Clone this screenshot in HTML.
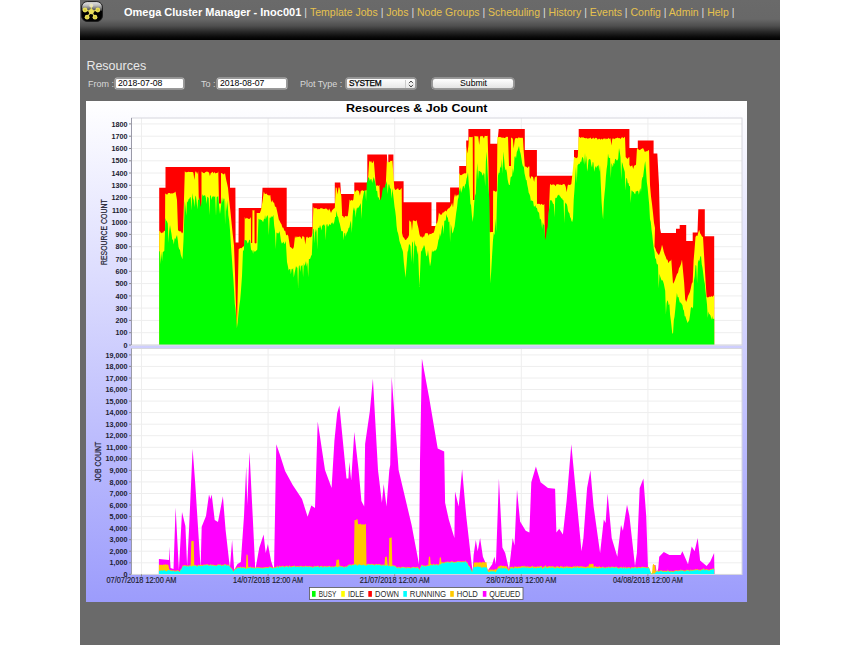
<!DOCTYPE html>
<html><head><meta charset="utf-8">
<style>
html,body{margin:0;padding:0;background:#fff;width:860px;height:645px;overflow:hidden;font-family:"Liberation Sans",sans-serif;}
#page{position:absolute;left:80px;top:0;width:700px;height:645px;background:#6a6a6a;}
#hdr{position:absolute;left:0;top:0;width:700px;height:40px;background:linear-gradient(#6a6a6a 0px,#686868 19px,#4e4e4e 26px,#262626 32px,#0a0a0a 37px,#000 40px);}
#hdr .t{position:absolute;left:44px;top:6px;white-space:nowrap;font-size:11px;color:#fff;font-weight:bold;}
#hdr .l{position:absolute;top:6px;white-space:nowrap;font-size:10.5px;color:#e6c24e;}
#hdr .l b{font-weight:normal;color:#ddd;}
.abs{position:absolute;white-space:nowrap;}
#res{left:6.4px;top:59.3px;font-size:12.5px;color:#e8e8e8;}
.lbl{font-size:9px;color:#d8d8d8;top:79px;}
.inp{position:absolute;top:78.3px;height:9.2px;background:#fff;border:1px solid #9a9a9a;border-radius:2px;box-shadow:0 0 0 0.5px #bbb;}
.inp span{position:absolute;left:2px;top:-1px;font-size:8.7px;color:#000;}
#chart{position:absolute;left:86px;top:101px;}
</style></head><body>
<div id="page">
 <div id="hdr">
  <svg style="position:absolute;left:0.7px;top:1.2px" width="23" height="22" viewBox="0 0 23 22">
   <defs><linearGradient id="lg" x1="0" y1="0" x2="0" y2="1"><stop offset="0" stop-color="#e8e8e8"/><stop offset="0.2" stop-color="#bbb"/><stop offset="0.42" stop-color="#555"/><stop offset="0.5" stop-color="#000"/><stop offset="1" stop-color="#000"/></linearGradient></defs>
   <rect x="0.6" y="0.6" width="20.8" height="19.8" rx="5.5" fill="url(#lg)" stroke="#1a1a1a" stroke-width="1"/>
   <g stroke="#e6dc5a" stroke-width="1.1" fill="none">
    <line x1="10.3" y1="10.6" x2="10.3" y2="4.2"/><line x1="10.3" y1="10.6" x2="4" y2="9"/><line x1="10.3" y1="10.6" x2="16.8" y2="9"/><line x1="10.3" y1="10.6" x2="6.1" y2="16.2"/><line x1="10.3" y1="10.6" x2="14" y2="16.2"/>
   </g>
   <g fill="#e9df5c">
    <circle cx="10.3" cy="10.6" r="2.6"/><circle cx="4" cy="9" r="2.4"/><circle cx="16.8" cy="9" r="2.4"/><circle cx="6.1" cy="16.2" r="2.4"/><circle cx="14" cy="16.2" r="2.4"/>
   </g>
   <g fill="#d7cc3e"><circle cx="4" cy="9" r="1.2"/><circle cx="16.8" cy="9" r="1.2"/><circle cx="6.1" cy="16.2" r="1.2"/><circle cx="14" cy="16.2" r="1.2"/></g>
   <circle cx="10.3" cy="4.4" r="2" fill="#f0ebc0" opacity="0.8"/>
  </svg>
  <div class="t">Omega Cluster Manager - Inoc001 <b style="font-weight:normal;color:#ddd;font-size:10.5px">|</b></div>
  <div class="l" style="left:230px">Template Jobs <b>|</b> Jobs <b>|</b> Node Groups <b>|</b> Scheduling <b>|</b> History <b>|</b> Events <b>|</b> Config <b>|</b> Admin <b>|</b> Help <b>|</b></div>
 </div>
 <div id="res" class="abs">Resources</div>
 <div class="abs lbl" style="left:8px">From :</div>
 <div class="inp" style="left:35px;width:67px"><span>2018-07-08</span></div>
 <div class="abs lbl" style="left:121px">To :</div>
 <div class="inp" style="left:137px;width:68px"><span>2018-08-07</span></div>
 <div class="abs lbl" style="left:220px">Plot Type :</div>
 <div class="inp" style="left:265.5px;width:68px;background:linear-gradient(#fff,#e8e8e8)"><span style="font-size:8.3px;left:2.5px;top:-1px;letter-spacing:-0.3px;-webkit-text-stroke:0.25px #000">SYSTEM</span>
   <div style="position:absolute;left:58px;top:1px;width:1px;height:8px;background:#ccc"></div>
   <svg style="position:absolute;left:61px;top:1px" width="6" height="8"><path d="M1 3.2 L3 1 L5 3.2 M1 4.8 L3 7 L5 4.8" stroke="#333" stroke-width="0.9" fill="none"/></svg>
 </div>
 <div class="inp" style="left:352px;width:80px;background:linear-gradient(#fff,#e4e4e4);border-radius:3px"><span style="left:27px">Submit</span></div>
</div>
<svg id="chart" width="661" height="501" viewBox="86 101 661 501">
 <defs>
  <linearGradient id="bg" x1="0" y1="0" x2="0" y2="1"><stop offset="0" stop-color="#fff"/><stop offset="1" stop-color="#9c9cfc"/></linearGradient>
 </defs>
 <rect x="86" y="101" width="661" height="501" fill="url(#bg)"/>
 <rect x="131" y="118" width="611" height="227" fill="#fff"/>
 <rect x="131" y="348.5" width="611" height="226" fill="#fff"/>
 <!--CHART--><g stroke="#eeeeee" stroke-width="1"><line x1="131" y1="345.0" x2="742" y2="345.0"/><line x1="131" y1="332.7" x2="742" y2="332.7"/><line x1="131" y1="320.4" x2="742" y2="320.4"/><line x1="131" y1="308.1" x2="742" y2="308.1"/><line x1="131" y1="295.9" x2="742" y2="295.9"/><line x1="131" y1="283.6" x2="742" y2="283.6"/><line x1="131" y1="271.3" x2="742" y2="271.3"/><line x1="131" y1="259.0" x2="742" y2="259.0"/><line x1="131" y1="246.7" x2="742" y2="246.7"/><line x1="131" y1="234.4" x2="742" y2="234.4"/><line x1="131" y1="222.2" x2="742" y2="222.2"/><line x1="131" y1="209.9" x2="742" y2="209.9"/><line x1="131" y1="197.6" x2="742" y2="197.6"/><line x1="131" y1="185.3" x2="742" y2="185.3"/><line x1="131" y1="173.0" x2="742" y2="173.0"/><line x1="131" y1="160.8" x2="742" y2="160.8"/><line x1="131" y1="148.5" x2="742" y2="148.5"/><line x1="131" y1="136.2" x2="742" y2="136.2"/><line x1="131" y1="123.9" x2="742" y2="123.9"/><line x1="131" y1="574.3" x2="742" y2="574.3"/><line x1="131" y1="562.8" x2="742" y2="562.8"/><line x1="131" y1="551.2" x2="742" y2="551.2"/><line x1="131" y1="539.7" x2="742" y2="539.7"/><line x1="131" y1="528.1" x2="742" y2="528.1"/><line x1="131" y1="516.6" x2="742" y2="516.6"/><line x1="131" y1="505.0" x2="742" y2="505.0"/><line x1="131" y1="493.5" x2="742" y2="493.5"/><line x1="131" y1="481.9" x2="742" y2="481.9"/><line x1="131" y1="470.4" x2="742" y2="470.4"/><line x1="131" y1="458.8" x2="742" y2="458.8"/><line x1="131" y1="447.3" x2="742" y2="447.3"/><line x1="131" y1="435.7" x2="742" y2="435.7"/><line x1="131" y1="424.2" x2="742" y2="424.2"/><line x1="131" y1="412.6" x2="742" y2="412.6"/><line x1="131" y1="401.1" x2="742" y2="401.1"/><line x1="131" y1="389.5" x2="742" y2="389.5"/><line x1="131" y1="378.0" x2="742" y2="378.0"/><line x1="131" y1="366.4" x2="742" y2="366.4"/><line x1="131" y1="354.9" x2="742" y2="354.9"/><line x1="141.5" y1="118" x2="141.5" y2="345"/><line x1="141.5" y1="348.5" x2="141.5" y2="574.3"/><line x1="268.1" y1="118" x2="268.1" y2="345"/><line x1="268.1" y1="348.5" x2="268.1" y2="574.3"/><line x1="394.7" y1="118" x2="394.7" y2="345"/><line x1="394.7" y1="348.5" x2="394.7" y2="574.3"/><line x1="521.3" y1="118" x2="521.3" y2="345"/><line x1="521.3" y1="348.5" x2="521.3" y2="574.3"/><line x1="647.9" y1="118" x2="647.9" y2="345"/><line x1="647.9" y1="348.5" x2="647.9" y2="574.3"/></g><path d="M159.2 345.0 L159.2 187.8 L165.5 187.8 L165.5 167.0 L230.0 167.0 L230.0 187.8 L235.4 187.8 L235.6 242.5 L238.5 242.5 L238.7 208.0 L261.5 208.0 L262.5 187.8 L286.7 187.8 L286.7 227.0 L312.4 227.0 L312.4 203.3 L334.8 203.3 L334.8 182.4 L340.3 182.4 L341.0 194.0 L354.3 194.0 L354.3 182.4 L367.3 182.4 L367.3 154.5 L386.9 154.5 L387.5 168.0 L388.3 168.0 L388.3 154.5 L393.4 154.5 L393.4 181.3 L403.6 181.3 L403.6 202.3 L431.5 202.3 L431.5 226.0 L436.2 226.0 L436.2 202.3 L450.1 202.3 L450.1 187.4 L459.2 187.4 L459.2 166.0 L466.2 166.0 L466.2 140.5 L468.4 140.5 L468.4 129.0 L490.3 129.0 L490.3 143.8 L497.4 143.8 L498.7 129.0 L524.8 129.0 L524.8 150.0 L536.9 150.0 L536.9 175.8 L574.0 175.8 L574.0 150.0 L578.7 150.0 L578.7 129.0 L629.4 129.0 L629.4 148.0 L637.8 148.0 L637.8 140.5 L653.6 140.5 L653.6 153.5 L657.3 153.5 L659.0 185.0 L660.0 228.0 L661.0 233.0 L676.0 233.0 L676.0 228.8 L679.7 228.8 L679.7 225.0 L686.2 225.0 L686.2 241.0 L692.7 241.0 L692.7 232.6 L697.5 232.6 L698.3 209.3 L704.8 209.3 L704.8 236.3 L714.2 236.3 L714.2 345.0 Z" fill="#ff0000"/><path d="M159.2 345.0 L159.2 230.7 L160.2 231.4 L161.1 233.2 L162.1 232.5 L163.1 232.8 L164.0 230.9 L165.0 230.7 L165.2 193.5 L166.1 193.9 L167.1 194.8 L168.0 193.2 L168.9 193.0 L169.9 193.1 L170.8 193.8 L171.8 193.3 L172.7 193.4 L173.6 193.0 L174.6 192.5 L175.5 191.6 L177.0 200.0 L178.0 230.0 L179.0 231.2 L180.0 231.2 L181.0 231.5 L182.0 233.4 L183.0 232.0 L183.9 202.4 L184.8 171.2 L185.8 172.2 L186.7 172.2 L187.7 171.9 L188.6 171.8 L189.6 171.9 L190.5 172.1 L191.5 172.1 L192.5 171.9 L193.4 172.8 L194.4 179.9 L195.3 171.4 L196.3 171.8 L197.2 174.0 L198.2 171.2 L199.0 210.0 L200.2 211.3 L201.5 210.0 L201.5 171.5 L202.4 172.2 L203.4 172.9 L204.3 173.2 L205.2 172.3 L206.2 171.8 L207.1 171.5 L208.0 172.1 L209.0 172.4 L209.9 176.0 L210.8 173.1 L211.8 172.4 L212.7 171.8 L213.6 173.4 L214.6 171.9 L215.5 173.6 L216.4 172.9 L217.4 173.0 L218.3 171.5 L219.0 202.8 L220.0 204.3 L221.0 202.8 L221.0 173.0 L222.0 173.3 L223.0 174.0 L224.0 174.4 L225.0 173.0 L226.0 179.0 L227.0 183.2 L228.0 188.0 L229.2 200.6 L230.5 212.0 L231.7 224.2 L232.8 235.1 L234.0 245.6 L235.0 273.7 L235.9 302.5 L236.9 328.0 L238.7 249.0 L239.7 248.4 L240.6 248.1 L241.6 248.3 L242.6 246.9 L243.5 246.6 L244.5 245.0 L244.7 217.0 L245.7 219.1 L246.8 217.8 L247.8 218.4 L248.8 218.9 L249.9 218.7 L250.9 217.0 L251.0 243.0 L252.2 243.0 L252.5 210.0 L253.4 210.5 L254.4 210.0 L254.6 243.0 L255.6 243.5 L256.5 243.0 L256.7 213.0 L257.8 212.9 L258.9 213.0 L259.9 212.9 L261.0 210.0 L261.9 205.1 L262.9 198.8 L263.8 191.6 L264.7 193.7 L265.7 193.9 L266.6 193.6 L267.5 194.9 L268.4 195.2 L269.4 195.5 L270.3 195.0 L271.2 202.5 L272.2 199.9 L273.1 202.2 L274.1 202.7 L275.1 206.9 L276.0 206.5 L276.9 210.2 L277.9 214.9 L278.8 219.4 L279.7 221.0 L280.6 223.1 L281.5 224.3 L282.4 227.5 L283.4 227.8 L284.3 230.7 L285.2 230.7 L286.2 235.4 L287.3 234.5 L288.3 236.0 L290.0 247.0 L290.9 247.2 L291.9 248.3 L292.9 249.0 L293.8 247.0 L295.0 236.0 L295.9 238.0 L296.9 236.3 L297.8 237.3 L298.7 236.7 L299.7 236.6 L300.6 237.1 L301.5 239.3 L302.5 236.1 L303.4 236.5 L304.3 236.9 L305.3 244.6 L306.2 237.6 L307.1 236.4 L308.1 238.0 L309.0 237.4 L309.9 236.8 L310.9 237.4 L311.8 236.0 L312.4 233.0 L313.4 207.0 L314.7 208.4 L316.0 208.0 L316.9 208.5 L317.9 209.5 L318.8 208.7 L319.8 209.2 L320.7 208.1 L321.6 208.3 L322.6 208.6 L323.5 209.0 L324.5 208.9 L325.4 208.4 L326.3 208.5 L327.3 209.2 L328.2 210.7 L329.2 208.5 L330.1 210.4 L331.0 213.1 L332.0 210.4 L332.9 209.5 L333.9 208.5 L334.8 208.0 L335.7 187.4 L336.6 187.7 L337.5 194.4 L338.5 187.6 L339.4 187.4 L340.4 192.1 L341.3 195.8 L342.2 216.0 L343.1 216.1 L344.1 217.9 L345.0 216.2 L345.9 216.1 L346.9 216.4 L347.8 216.0 L348.7 208.9 L349.6 199.5 L350.6 201.0 L351.5 199.8 L352.4 200.8 L353.4 199.5 L354.3 190.0 L355.2 192.0 L356.2 190.4 L357.1 190.2 L358.0 190.4 L358.9 191.2 L359.9 195.7 L360.8 191.1 L361.7 190.6 L362.7 190.3 L363.6 191.1 L364.5 191.0 L365.4 190.6 L366.4 190.3 L367.3 190.0 L368.2 176.8 L369.2 160.5 L370.1 162.3 L371.0 160.8 L372.0 163.1 L372.9 162.5 L373.8 160.5 L374.8 173.1 L375.7 184.7 L376.6 185.9 L377.5 185.3 L378.5 186.2 L379.4 184.7 L380.0 201.0 L381.0 201.0 L382.0 201.1 L383.0 202.9 L384.0 210.5 L385.0 201.0 L385.9 181.7 L386.9 160.5 L387.8 162.7 L388.7 161.8 L389.6 162.3 L390.6 160.8 L391.5 160.9 L392.4 160.5 L393.4 174.9 L394.3 188.0 L395.2 189.9 L396.1 189.4 L397.1 189.1 L398.0 188.1 L398.9 190.0 L399.9 189.9 L400.8 189.1 L401.7 188.0 L402.0 233.0 L403.0 237.0 L404.0 237.7 L405.0 239.8 L406.0 240.0 L407.0 238.6 L408.0 237.5 L409.0 235.0 L409.2 220.0 L410.1 221.7 L411.1 221.2 L412.0 230.8 L412.9 220.4 L413.8 220.4 L414.8 220.9 L415.7 221.3 L416.6 220.0 L417.5 224.5 L418.5 228.4 L419.4 234.1 L420.3 236.7 L421.2 236.2 L422.2 238.1 L423.1 236.2 L424.0 237.1 L425.0 233.8 L425.9 233.0 L426.8 233.3 L427.8 233.2 L428.7 235.8 L429.6 233.8 L430.6 234.0 L431.5 233.7 L432.5 233.1 L433.4 233.0 L434.3 231.1 L435.2 226.8 L436.1 223.8 L437.1 223.0 L438.0 219.4 L438.9 212.6 L439.8 214.1 L440.8 214.7 L441.8 214.6 L442.7 212.6 L443.6 212.5 L444.6 211.6 L445.5 210.5 L446.4 211.5 L447.3 209.8 L448.2 208.4 L449.2 208.3 L450.1 207.0 L451.1 205.4 L452.1 202.8 L453.0 207.5 L454.0 198.0 L455.0 194.0 L456.0 196.7 L457.0 194.6 L458.0 195.7 L459.0 194.0 L459.2 173.0 L460.2 174.9 L461.2 175.3 L462.2 174.6 L463.2 174.0 L464.2 173.3 L465.2 173.5 L466.2 173.0 L466.2 146.0 L467.3 153.6 L468.4 146.0 L469.0 136.7 L469.9 137.3 L470.9 136.9 L471.8 137.3 L472.7 136.7 L473.0 200.0 L474.5 200.0 L474.5 135.8 L475.4 136.2 L476.4 136.2 L477.3 136.4 L478.2 136.3 L479.2 145.1 L480.1 136.2 L481.1 136.5 L482.0 135.8 L482.9 136.6 L483.9 138.5 L484.8 135.8 L485.7 136.1 L486.7 136.1 L487.6 135.8 L488.5 166.5 L489.4 232.0 L490.3 232.2 L491.2 232.0 L492.1 232.0 L493.0 232.0 L493.1 190.7 L494.1 190.8 L495.0 191.2 L495.9 191.9 L496.9 190.7 L497.4 136.7 L498.4 137.3 L499.3 137.0 L500.3 136.9 L501.3 137.5 L502.2 137.8 L503.2 137.6 L504.1 138.1 L505.1 137.9 L506.1 136.8 L507.0 137.1 L508.0 136.7 L509.0 166.0 L510.0 166.1 L511.0 166.0 L511.0 137.5 L511.9 137.9 L512.8 138.8 L513.7 148.6 L514.7 139.9 L515.6 137.9 L516.5 138.1 L517.4 138.5 L518.3 137.6 L519.2 137.6 L520.2 138.1 L521.1 137.6 L522.0 138.2 L522.9 137.5 L523.8 152.8 L524.8 166.5 L525.7 166.5 L526.6 166.9 L527.6 167.9 L528.5 166.5 L529.4 166.5 L529.4 175.8 L530.3 178.9 L531.3 176.2 L532.2 176.5 L533.1 177.3 L534.1 182.0 L535.0 176.6 L536.0 177.6 L536.9 175.8 L537.0 203.7 L537.9 204.0 L538.8 203.8 L539.7 204.1 L540.6 204.7 L541.6 203.7 L542.5 204.7 L543.4 204.9 L544.3 203.7 L545.2 253.6 L546.1 248.1 L547.1 239.8 L548.0 231.6 L549.0 208.9 L550.0 184.0 L550.9 184.5 L551.9 185.2 L552.8 184.2 L553.7 184.5 L554.6 184.8 L555.6 186.2 L556.5 184.3 L557.4 184.2 L558.3 184.3 L559.3 184.8 L560.2 184.4 L561.1 185.0 L562.0 185.1 L563.0 184.2 L563.9 184.0 L564.8 184.5 L565.7 186.8 L566.7 192.3 L567.6 185.7 L568.5 184.4 L569.4 184.9 L570.4 184.7 L571.3 184.0 L572.2 175.6 L573.1 166.9 L574.0 157.0 L575.0 157.3 L575.9 158.2 L576.8 158.1 L577.8 157.0 L578.7 136.7 L579.6 136.9 L580.5 138.1 L581.4 137.3 L582.3 137.4 L583.3 137.2 L584.2 137.9 L585.1 137.9 L586.0 138.5 L586.9 137.7 L587.8 139.0 L588.7 138.3 L589.6 138.2 L590.5 137.6 L591.4 138.9 L592.4 138.6 L593.3 137.6 L594.2 138.9 L595.1 138.1 L596.0 137.7 L596.9 138.3 L597.8 139.7 L598.7 138.7 L599.6 138.8 L600.5 139.7 L601.4 138.6 L602.3 139.8 L603.2 138.4 L604.1 139.1 L605.0 138.0 L605.9 139.4 L606.8 138.5 L607.7 139.1 L608.6 137.8 L609.5 139.1 L610.5 138.2 L611.4 145.6 L612.3 138.7 L613.2 138.2 L614.1 139.2 L615.0 138.4 L615.9 138.2 L616.8 138.1 L617.7 137.5 L618.6 138.3 L619.5 138.0 L620.5 138.9 L621.4 137.7 L622.3 137.1 L623.2 138.2 L624.1 137.5 L625.0 136.7 L625.7 157.0 L626.6 158.0 L627.5 159.1 L628.5 157.4 L629.4 157.0 L629.4 164.7 L630.3 166.4 L631.3 166.0 L632.2 165.3 L633.2 168.9 L634.1 165.7 L635.1 165.2 L636.0 164.7 L637.0 148.0 L638.0 149.1 L639.0 149.7 L640.0 150.3 L641.0 148.9 L642.0 148.7 L643.0 148.0 L644.0 150.0 L645.0 152.2 L646.0 151.1 L647.0 151.6 L648.0 150.6 L649.0 150.0 L650.0 185.0 L651.0 196.5 L652.0 204.1 L653.0 213.0 L654.0 222.7 L655.0 228.0 L654.5 246.5 L655.4 248.5 L656.3 251.3 L657.2 252.7 L658.1 254.3 L659.0 255.0 L660.0 252.4 L661.0 249.6 L662.0 244.7 L662.9 247.8 L663.8 251.7 L664.8 254.8 L665.7 256.8 L666.6 259.5 L667.5 259.8 L668.5 263.2 L669.4 261.2 L670.4 261.0 L671.3 259.5 L673.0 283.7 L674.0 282.2 L675.0 279.7 L676.0 276.7 L677.0 274.0 L678.0 272.7 L679.0 268.2 L680.0 266.4 L681.0 264.1 L682.0 259.5 L683.0 270.8 L684.1 282.0 L685.2 299.2 L686.2 302.0 L687.1 299.4 L688.0 296.1 L689.0 293.9 L689.9 291.9 L690.8 288.3 L691.7 283.7 L692.7 282.1 L693.6 260.7 L694.5 249.9 L695.5 237.0 L696.4 235.5 L697.4 236.1 L698.3 232.4 L699.2 229.8 L700.2 233.4 L701.1 234.7 L702.0 236.6 L703.0 237.0 L703.9 252.3 L704.8 268.3 L705.7 283.0 L706.6 296.7 L707.6 297.5 L708.5 297.2 L709.5 296.6 L710.4 296.9 L711.4 296.0 L712.3 296.9 L713.2 296.1 L714.2 295.0 L714.2 345.0 Z" fill="#ffff00"/><path d="M159.2 345.0 L159.2 251.0 L159.9 251.6 L160.7 264.1 L161.4 251.6 L162.1 261.2 L162.8 252.0 L163.6 251.5 L164.3 251.0 L165.5 218.0 L166.2 220.4 L167.0 221.6 L167.8 223.7 L168.5 242.7 L169.2 231.0 L170.0 225.0 L170.8 230.1 L171.5 233.9 L172.2 239.2 L173.0 240.0 L173.8 244.4 L174.6 238.3 L175.4 239.0 L176.2 237.0 L177.0 235.0 L177.8 240.1 L178.5 246.7 L179.2 249.0 L180.0 250.0 L180.8 254.7 L181.5 256.7 L182.5 259.2 L183.5 240.0 L184.8 201.0 L185.5 207.0 L186.3 215.8 L187.0 201.0 L187.8 202.4 L188.5 199.3 L189.2 198.9 L190.0 197.2 L190.7 197.3 L191.5 210.2 L192.2 193.0 L192.9 198.1 L193.7 200.1 L194.4 207.2 L195.2 197.0 L195.9 195.6 L196.6 201.4 L197.4 209.6 L198.1 199.4 L198.9 200.0 L199.6 197.0 L200.5 207.0 L201.4 203.6 L202.4 194.0 L203.1 196.1 L203.8 195.4 L204.5 195.2 L205.2 195.6 L205.9 197.7 L206.6 204.0 L207.3 196.8 L208.0 197.0 L208.7 198.2 L209.4 215.0 L210.1 195.9 L210.8 195.0 L211.5 200.1 L212.3 196.1 L213.0 197.5 L213.8 195.8 L214.5 196.9 L215.2 196.3 L216.0 215.9 L216.7 196.9 L217.5 196.8 L218.2 196.0 L219.1 205.8 L220.0 214.0 L221.0 206.5 L222.0 197.0 L222.8 202.5 L223.6 198.5 L224.4 198.7 L225.1 224.3 L225.9 200.5 L226.7 211.4 L227.5 200.0 L228.3 214.9 L229.2 220.7 L230.0 230.0 L231.0 246.0 L232.0 260.0 L232.7 270.8 L233.4 279.8 L234.1 291.3 L234.8 303.7 L235.5 309.0 L236.2 318.4 L236.9 328.0 L237.7 322.2 L238.5 313.4 L239.4 305.3 L240.2 299.8 L241.0 290.0 L242.0 275.9 L243.0 250.0 L243.8 251.1 L244.5 239.7 L245.3 240.2 L246.1 239.9 L246.9 241.3 L247.6 243.6 L248.4 242.5 L249.2 240.0 L250.0 239.7 L251.0 249.6 L251.7 250.6 L252.4 250.4 L253.1 253.7 L253.8 250.1 L254.5 251.8 L255.2 251.6 L255.9 251.1 L256.6 250.2 L257.3 249.6 L258.5 218.6 L259.3 219.7 L260.1 219.1 L260.8 219.9 L261.6 219.9 L262.4 220.9 L263.1 222.2 L263.9 219.3 L264.7 218.6 L265.0 215.0 L265.8 219.6 L266.5 217.0 L267.3 215.0 L268.1 217.1 L268.8 235.2 L269.6 217.6 L270.3 218.2 L271.1 215.9 L271.9 217.6 L272.6 216.5 L273.4 215.0 L274.2 225.7 L275.0 231.0 L275.8 248.9 L276.5 232.3 L277.3 233.5 L278.1 232.4 L278.8 233.7 L279.6 231.0 L281.0 241.0 L281.8 243.5 L282.6 243.0 L283.4 241.4 L284.2 243.9 L285.0 243.3 L285.8 241.0 L287.0 262.0 L287.8 265.7 L288.7 270.5 L289.5 269.0 L290.2 269.0 L290.9 274.2 L291.7 268.8 L292.4 269.5 L293.1 268.0 L293.8 277.5 L294.6 273.1 L295.3 269.7 L296.0 266.0 L296.7 267.4 L297.4 267.7 L298.1 287.9 L298.8 266.6 L299.5 265.0 L300.3 271.9 L301.0 264.7 L301.7 266.6 L302.4 264.8 L303.1 277.1 L303.8 263.0 L304.5 265.9 L305.3 263.8 L306.0 261.1 L306.7 266.8 L307.4 262.2 L308.2 277.3 L308.9 259.1 L309.6 259.0 L310.3 258.4 L311.1 255.8 L311.8 255.0 L313.0 228.5 L313.7 229.6 L314.4 243.3 L315.1 228.5 L315.8 232.4 L316.5 229.3 L317.2 249.6 L317.9 228.5 L318.6 227.4 L319.3 228.0 L320.0 225.0 L320.7 226.9 L321.4 230.4 L322.1 226.1 L322.9 224.9 L323.6 224.3 L324.3 226.1 L325.0 224.1 L325.7 240.2 L326.4 225.0 L327.2 223.8 L327.9 226.8 L328.6 225.9 L329.3 224.1 L330.0 224.8 L330.8 224.8 L331.5 222.6 L332.2 223.8 L332.9 222.0 L333.6 224.5 L334.4 221.2 L335.1 217.0 L335.9 217.1 L336.6 210.7 L337.4 216.0 L338.2 216.9 L339.0 221.2 L339.8 223.8 L340.6 227.5 L341.4 231.2 L342.2 231.0 L342.9 231.5 L343.6 240.3 L344.3 233.2 L345.0 232.7 L345.7 236.8 L346.4 233.6 L347.1 232.3 L347.8 231.0 L348.6 227.9 L349.4 227.4 L350.2 222.9 L351.0 220.6 L351.8 233.1 L352.6 216.8 L353.4 207.0 L354.1 211.2 L354.9 207.5 L355.6 217.8 L356.4 209.9 L357.1 207.3 L357.8 208.5 L358.6 207.2 L359.3 206.2 L360.1 204.7 L360.8 203.0 L361.6 219.0 L362.3 201.1 L363.1 196.5 L363.8 192.8 L364.6 190.0 L365.3 190.5 L366.1 201.1 L366.8 182.2 L367.6 180.6 L368.3 177.0 L369.1 178.1 L369.9 180.9 L370.7 179.1 L371.4 178.9 L372.2 182.9 L373.0 179.4 L373.8 177.0 L374.8 180.9 L375.7 184.7 L376.4 191.1 L377.2 191.1 L377.9 197.3 L378.7 197.3 L379.4 199.5 L380.1 200.2 L380.8 199.0 L381.6 196.4 L382.3 191.1 L383.0 188.4 L383.8 187.1 L384.6 188.1 L385.3 184.5 L386.1 184.1 L386.9 181.0 L387.7 194.2 L388.5 184.4 L389.3 184.6 L390.0 188.2 L390.8 188.8 L391.6 198.7 L392.4 188.4 L393.1 194.0 L393.8 200.0 L394.5 206.4 L395.2 210.8 L395.9 216.4 L396.6 226.0 L397.3 231.3 L398.0 233.0 L398.7 236.3 L399.4 240.8 L400.1 243.1 L400.9 245.1 L401.6 247.7 L402.3 249.6 L403.0 252.0 L403.8 262.3 L404.7 269.9 L405.5 277.8 L406.5 265.8 L407.5 252.0 L408.2 250.2 L409.0 244.0 L409.8 244.8 L410.5 246.1 L411.3 262.2 L412.1 242.9 L412.9 241.2 L413.6 264.6 L414.4 240.0 L415.1 244.0 L415.8 246.0 L416.6 246.5 L417.3 254.8 L418.0 250.0 L419.4 287.0 L420.2 269.5 L421.0 250.0 L421.8 251.8 L422.5 248.4 L423.2 247.7 L424.0 245.0 L424.8 247.0 L425.6 252.3 L426.4 256.6 L427.2 255.5 L428.0 250.0 L429.0 258.5 L430.0 266.6 L431.0 261.5 L432.0 250.0 L432.8 252.2 L433.6 251.3 L434.4 250.5 L435.2 250.8 L436.0 250.0 L436.8 248.7 L437.6 245.3 L438.4 240.2 L439.2 238.3 L440.0 233.0 L440.7 236.7 L441.4 230.8 L442.1 227.3 L442.8 224.6 L443.6 234.3 L444.3 220.9 L445.0 220.5 L445.7 220.5 L446.4 214.0 L447.1 216.7 L447.9 218.0 L448.6 222.3 L449.4 221.6 L450.1 241.9 L450.8 224.0 L451.6 227.9 L452.3 233.5 L453.1 231.9 L453.8 229.3 L454.6 226.3 L455.4 219.6 L456.2 212.8 L457.0 207.8 L457.8 199.9 L458.6 197.1 L459.4 188.0 L460.1 191.7 L460.8 187.3 L461.5 193.1 L462.2 189.3 L462.9 186.3 L463.6 185.7 L464.3 188.8 L465.0 184.7 L465.8 183.7 L466.5 178.8 L467.2 176.6 L468.0 172.0 L468.8 184.6 L469.6 190.5 L470.4 203.4 L471.1 205.5 L471.9 215.4 L472.7 222.0 L473.5 215.0 L474.2 203.2 L475.0 195.7 L475.8 193.2 L476.5 175.5 L477.3 163.0 L478.0 179.8 L478.7 170.4 L479.4 170.9 L480.1 171.4 L480.9 171.9 L481.6 172.6 L482.3 174.8 L483.0 175.8 L483.7 172.5 L484.4 173.9 L485.2 186.2 L485.9 161.5 L486.6 151.6 L487.5 170.6 L488.5 187.5 L489.4 200.0 L490.3 283.4 L491.2 271.6 L492.1 255.3 L493.0 240.0 L493.8 232.8 L494.6 235.3 L495.4 218.4 L496.2 232.2 L497.0 200.0 L498.0 175.8 L498.8 172.5 L499.5 173.0 L500.3 166.3 L501.1 168.2 L501.9 159.0 L502.6 173.8 L503.4 151.6 L504.1 158.8 L504.8 166.9 L505.5 170.3 L506.2 169.3 L506.9 172.5 L507.6 179.3 L508.3 182.7 L509.0 185.0 L509.8 185.1 L510.6 177.5 L511.4 176.4 L512.1 176.2 L512.9 168.3 L513.7 173.2 L514.5 157.0 L515.2 156.1 L516.0 158.5 L516.8 152.1 L517.5 150.6 L518.2 148.4 L519.0 146.0 L519.8 151.1 L520.6 153.4 L521.4 158.2 L522.2 163.4 L523.0 166.6 L523.8 166.5 L524.5 173.2 L525.2 176.2 L525.9 179.7 L526.6 180.3 L527.3 185.1 L528.0 188.3 L528.7 192.8 L529.4 194.0 L530.1 195.9 L530.9 201.2 L531.6 200.3 L532.4 201.1 L533.1 201.3 L533.9 206.6 L534.6 206.6 L535.4 205.3 L536.1 207.9 L536.9 207.4 L537.6 211.2 L538.4 212.0 L539.1 213.1 L539.9 219.4 L540.6 218.5 L541.3 220.9 L542.1 229.0 L542.8 222.2 L543.6 224.7 L544.3 225.0 L545.2 240.0 L546.0 236.4 L546.8 229.7 L547.6 227.0 L548.4 214.4 L549.2 208.4 L550.0 200.0 L550.8 200.6 L551.5 200.3 L552.2 201.6 L553.0 203.7 L553.8 204.0 L554.5 217.3 L555.2 198.4 L556.0 197.4 L556.8 198.1 L557.5 195.6 L558.2 195.2 L559.0 194.4 L559.8 196.2 L560.5 196.8 L561.3 198.6 L562.0 198.2 L562.8 200.1 L563.6 200.5 L564.3 223.3 L565.1 202.2 L565.8 203.6 L566.6 203.7 L567.3 206.1 L568.0 211.1 L568.7 212.5 L569.4 213.2 L570.1 216.9 L570.8 218.2 L571.5 221.1 L572.2 222.0 L573.0 218.8 L573.7 200.1 L574.5 189.3 L575.2 178.0 L576.0 166.5 L576.8 183.2 L577.5 165.4 L578.2 164.6 L579.0 163.5 L579.8 164.1 L580.5 161.4 L581.2 162.1 L582.0 158.0 L582.8 156.7 L583.5 159.6 L584.2 164.8 L585.0 153.0 L585.7 163.7 L586.4 155.4 L587.1 171.6 L587.8 167.9 L588.5 160.0 L589.2 159.2 L589.9 159.1 L590.6 160.1 L591.3 164.9 L592.0 167.4 L592.7 162.0 L593.4 162.6 L594.2 171.7 L594.9 168.5 L595.6 166.1 L596.4 168.0 L597.1 165.6 L597.8 166.4 L598.5 164.6 L599.3 171.7 L600.0 165.0 L600.8 184.1 L601.6 202.0 L602.4 213.0 L603.1 219.4 L603.8 201.9 L604.5 193.9 L605.2 187.2 L605.9 176.7 L606.6 169.2 L607.3 164.5 L608.0 153.5 L608.7 157.4 L609.4 157.9 L610.1 158.1 L610.8 178.0 L611.5 163.0 L612.2 165.1 L612.9 167.2 L613.6 162.8 L614.4 164.0 L615.1 158.7 L615.9 159.2 L616.7 160.6 L617.5 160.3 L618.2 158.4 L619.0 148.0 L619.7 151.5 L620.5 157.3 L621.2 179.6 L621.9 162.0 L622.6 163.7 L623.3 166.9 L624.1 169.5 L624.8 172.0 L625.5 190.5 L626.3 177.9 L627.0 178.5 L627.8 183.2 L628.5 182.9 L629.2 186.2 L630.0 185.9 L630.7 203.1 L631.5 190.4 L632.2 190.7 L632.9 191.7 L633.7 192.0 L634.4 193.6 L635.2 194.3 L635.9 190.9 L636.6 191.4 L637.4 190.8 L638.1 191.0 L638.9 194.7 L639.6 190.7 L640.3 187.9 L641.0 192.1 L641.7 180.7 L642.4 177.5 L643.1 176.7 L643.8 170.9 L644.5 165.6 L645.2 161.0 L646.0 170.1 L646.8 182.0 L647.6 187.5 L648.4 196.2 L649.2 204.8 L650.0 219.3 L650.8 222.0 L651.5 229.6 L652.3 235.5 L653.0 242.6 L653.8 248.8 L654.5 252.0 L655.2 259.3 L655.9 258.1 L656.6 263.5 L657.3 263.9 L658.0 265.0 L658.7 288.2 L659.5 273.7 L660.2 276.5 L660.9 278.6 L661.6 280.4 L662.3 280.0 L663.1 281.4 L663.8 283.7 L664.5 287.2 L665.2 290.7 L665.9 314.6 L666.6 303.5 L667.3 300.2 L668.0 301.6 L668.7 305.2 L669.4 304.0 L670.1 314.7 L670.8 319.9 L671.5 326.2 L672.2 332.8 L673.0 333.9 L673.8 320.3 L674.5 316.8 L675.3 309.2 L676.1 300.3 L676.9 293.0 L677.7 297.2 L678.5 296.9 L679.3 300.4 L680.0 303.1 L680.8 302.3 L681.6 304.1 L682.4 305.0 L683.2 309.5 L683.9 310.6 L684.7 316.3 L685.4 316.3 L686.2 319.0 L687.6 323.0 L688.4 321.5 L689.2 320.3 L690.0 315.0 L690.8 308.3 L691.6 306.7 L692.4 308.5 L693.1 306.6 L693.9 280.7 L694.7 276.3 L695.5 265.0 L696.3 265.7 L697.1 283.4 L697.9 262.7 L698.6 260.0 L699.4 260.9 L700.2 257.1 L701.0 255.8 L701.8 264.4 L702.5 267.7 L703.3 273.9 L704.0 280.0 L704.8 283.7 L705.5 291.3 L706.3 297.9 L707.0 304.4 L707.8 317.8 L708.5 311.6 L709.2 313.9 L709.9 314.6 L710.6 315.7 L711.4 319.8 L712.1 316.1 L712.8 319.2 L713.5 318.7 L714.2 318.8 L714.2 345.0 Z" fill="#00ff00"/><path d="M158.9 574.3 L158.9 559.0 L169.0 560.0 L169.1 546.4 L170.6 568.0 L173.5 569.0 L175.6 507.4 L178.9 570.0 L182.0 512.0 L185.4 526.0 L187.1 566.0 L189.0 530.0 L192.6 448.8 L195.2 483.0 L200.6 568.0 L201.7 526.8 L206.0 516.0 L209.0 494.4 L210.4 499.0 L211.7 494.4 L214.7 520.0 L218.0 522.0 L222.9 496.3 L225.6 530.0 L229.9 568.0 L232.1 539.9 L234.2 570.0 L237.5 564.0 L240.8 562.0 L244.0 516.0 L246.2 466.5 L247.3 505.0 L249.5 452.0 L252.7 516.0 L255.3 570.0 L259.2 548.0 L263.6 534.4 L265.7 553.0 L267.9 544.0 L271.1 561.0 L274.0 570.0 L276.3 444.2 L280.0 455.0 L285.2 471.2 L292.7 485.0 L302.0 499.0 L307.6 516.7 L311.3 505.6 L315.0 508.0 L317.7 421.6 L325.0 470.0 L331.6 487.9 L334.4 441.0 L337.2 413.0 L339.4 405.4 L346.5 478.6 L348.4 478.6 L349.3 462.0 L351.2 480.5 L354.3 431.9 L358.6 470.0 L361.4 501.0 L364.2 506.5 L365.1 444.0 L369.8 411.4 L372.9 378.8 L378.0 470.0 L381.9 502.8 L383.7 484.0 L386.5 506.5 L389.3 470.0 L390.2 465.0 L391.7 377.0 L398.6 470.0 L411.6 525.0 L419.0 564.2 L420.0 461.0 L421.9 358.4 L429.3 398.4 L437.7 448.6 L444.2 451.4 L445.1 502.8 L448.8 519.5 L454.4 538.0 L455.0 491.6 L458.7 506.5 L462.1 469.3 L466.2 515.8 L471.7 564.2 L472.7 571.6 L473.6 554.9 L475.8 540.0 L477.7 551.2 L480.1 538.0 L482.9 556.7 L485.7 563.3 L487.6 570.7 L492.2 564.2 L494.4 556.7 L495.9 564.2 L498.9 478.6 L502.4 547.4 L505.2 553.0 L509.0 569.8 L512.7 538.0 L514.5 545.6 L517.0 489.8 L520.1 521.4 L525.7 530.7 L529.4 532.6 L531.3 482.3 L535.9 466.5 L540.6 482.3 L548.0 488.0 L555.1 488.8 L556.4 532.6 L559.2 528.8 L562.9 534.4 L566.6 500.9 L571.3 444.2 L581.5 551.2 L583.4 538.0 L587.1 487.9 L590.4 470.2 L593.6 506.5 L600.1 553.0 L603.8 519.5 L605.6 523.0 L607.6 493.5 L611.7 538.0 L617.3 556.7 L621.0 525.0 L622.9 530.7 L627.0 504.7 L629.4 515.8 L635.0 566.0 L636.9 553.0 L639.7 488.0 L643.4 478.6 L646.2 515.8 L648.0 568.0 L649.0 574.3 L652.7 574.3 L653.5 565.0 L655.5 565.0 L657.0 574.0 L658.3 568.0 L659.2 556.7 L663.8 552.0 L669.4 555.0 L680.6 555.0 L682.4 551.2 L688.0 564.2 L691.7 546.5 L694.6 551.2 L697.7 538.1 L700.1 560.5 L706.6 566.0 L710.3 561.4 L714.1 553.0 L714.5 574.3 L714.5 574.3 Z" fill="#ff00ff"/><path d="M158.9 574.3 L158.9 565.3 L159.5 564.6 L160.1 564.9 L160.7 564.8 L161.3 564.6 L161.9 565.1 L162.5 565.1 L163.1 564.9 L163.7 564.1 L164.3 564.9 L164.9 564.4 L165.5 564.1 L166.1 565.1 L166.7 564.5 L167.3 564.6 L167.9 564.7 L168.5 565.2 L169.1 569.1 L169.7 569.5 L170.3 570.2 L170.9 569.9 L171.5 570.1 L172.1 570.7 L172.7 570.3 L173.3 569.9 L173.9 570.4 L174.5 570.4 L175.1 571.4 L175.7 570.0 L176.3 571.0 L176.9 570.1 L177.5 570.3 L178.1 570.3 L178.7 570.6 L179.3 570.9 L179.9 571.4 L180.5 569.3 L181.1 569.2 L181.7 568.0 L182.3 566.8 L182.9 565.0 L183.5 565.7 L184.1 565.1 L184.7 565.4 L185.3 565.1 L185.9 565.5 L186.5 565.8 L187.1 565.8 L187.7 565.1 L188.3 565.7 L188.9 565.9 L189.5 564.7 L190.1 565.9 L190.7 564.5 L191.3 541.2 L191.9 541.1 L192.5 540.7 L193.1 541.3 L193.7 540.7 L194.3 565.5 L194.9 564.8 L195.5 565.0 L196.1 565.0 L196.7 566.0 L197.3 565.9 L197.9 565.1 L198.5 564.4 L199.1 565.2 L199.7 565.0 L200.3 565.1 L200.9 565.1 L201.5 564.6 L202.1 565.2 L202.7 565.1 L203.3 564.8 L203.9 564.5 L204.5 564.5 L205.1 565.0 L205.7 564.2 L206.3 564.6 L206.9 564.3 L207.5 564.0 L208.1 565.0 L208.7 564.7 L209.3 564.7 L209.9 565.1 L210.5 564.0 L211.1 564.7 L211.7 564.8 L212.3 565.1 L212.9 564.2 L213.5 565.1 L214.1 564.8 L214.7 565.4 L215.3 565.3 L215.9 565.0 L216.5 565.8 L217.1 564.7 L217.7 564.5 L218.3 564.5 L218.9 564.2 L219.5 564.7 L220.1 563.8 L220.7 564.7 L221.3 564.9 L221.9 565.2 L222.5 564.5 L223.1 565.4 L223.7 564.4 L224.3 564.6 L224.9 563.8 L225.5 564.3 L226.1 564.3 L226.7 565.4 L227.3 565.0 L227.9 564.2 L228.5 565.0 L229.1 565.3 L229.7 565.8 L230.3 566.8 L230.9 567.5 L231.5 568.2 L232.1 568.4 L232.7 570.0 L233.3 570.9 L233.9 570.5 L234.5 569.3 L235.1 568.6 L235.7 568.4 L236.3 568.5 L236.9 567.8 L237.5 566.9 L238.1 567.4 L238.7 567.1 L239.3 567.5 L239.9 567.0 L240.5 566.5 L241.1 567.2 L241.7 567.6 L242.3 566.7 L242.9 567.1 L243.5 567.6 L244.1 567.0 L244.7 566.9 L245.3 568.2 L245.9 567.6 L246.5 554.6 L247.1 554.4 L247.7 555.3 L248.3 567.8 L248.9 566.7 L249.5 566.9 L250.1 567.3 L250.7 566.3 L251.3 567.5 L251.9 567.5 L252.5 567.0 L253.1 567.5 L253.7 567.6 L254.3 567.4 L254.9 567.5 L255.5 567.9 L256.1 567.0 L256.7 567.3 L257.3 566.9 L257.9 567.7 L258.5 567.0 L259.1 567.4 L259.7 567.3 L260.3 567.2 L260.9 568.0 L261.5 567.2 L262.1 567.9 L262.7 567.6 L263.3 567.8 L263.9 567.1 L264.5 567.6 L265.1 567.6 L265.7 566.9 L266.3 567.3 L266.9 567.1 L267.5 567.2 L268.1 567.8 L268.7 566.9 L269.3 566.4 L269.9 566.4 L270.5 567.0 L271.1 566.9 L271.7 567.2 L272.3 567.5 L272.9 568.0 L273.5 567.3 L274.1 567.4 L274.7 566.7 L275.3 567.1 L275.9 567.2 L276.5 566.9 L277.1 565.3 L277.7 566.6 L278.3 567.0 L278.9 566.6 L279.5 565.5 L280.1 566.1 L280.7 566.5 L281.3 566.4 L281.9 565.8 L282.5 565.8 L283.1 566.7 L283.7 565.6 L284.3 566.9 L284.9 566.2 L285.5 566.3 L286.1 565.6 L286.7 565.9 L287.3 566.5 L287.9 565.5 L288.5 567.2 L289.1 565.5 L289.7 565.6 L290.3 566.2 L290.9 566.4 L291.5 566.6 L292.1 566.0 L292.7 566.1 L293.3 566.1 L293.9 565.9 L294.5 565.0 L295.1 566.7 L295.7 566.3 L296.3 566.3 L296.9 565.9 L297.5 566.3 L298.1 566.2 L298.7 566.2 L299.3 566.7 L299.9 565.4 L300.5 566.3 L301.1 565.7 L301.7 566.0 L302.3 566.9 L302.9 565.7 L303.5 566.2 L304.1 565.9 L304.7 566.7 L305.3 565.7 L305.9 565.4 L306.5 566.4 L307.1 566.0 L307.7 566.0 L308.3 566.7 L308.9 565.8 L309.5 566.0 L310.1 566.3 L310.7 566.4 L311.3 566.0 L311.9 566.7 L312.5 567.3 L313.1 566.0 L313.7 567.1 L314.3 565.2 L314.9 566.9 L315.5 566.0 L316.1 566.3 L316.7 566.0 L317.3 565.9 L317.9 565.6 L318.5 566.0 L319.1 566.8 L319.7 566.7 L320.3 566.0 L320.9 565.9 L321.5 565.9 L322.1 565.6 L322.7 567.1 L323.3 566.5 L323.9 566.3 L324.5 566.0 L325.1 565.7 L325.7 566.8 L326.3 566.6 L326.9 565.7 L327.5 566.7 L328.1 565.7 L328.7 566.5 L329.3 565.7 L329.9 566.0 L330.5 566.4 L331.1 566.4 L331.7 566.7 L332.3 565.8 L332.9 567.0 L333.5 566.8 L334.1 566.2 L334.7 566.4 L335.3 565.8 L335.9 566.1 L336.5 559.5 L337.1 560.0 L337.7 559.8 L338.3 559.4 L338.9 559.6 L339.5 565.3 L340.1 566.6 L340.7 565.4 L341.3 566.0 L341.9 566.2 L342.5 566.0 L343.1 567.0 L343.7 566.2 L344.3 567.0 L344.9 566.8 L345.5 566.0 L346.1 566.4 L346.7 566.7 L347.3 565.6 L347.9 565.4 L348.5 564.8 L349.1 564.7 L349.7 564.2 L350.3 564.2 L350.9 564.7 L351.5 564.9 L352.1 564.3 L352.7 564.3 L353.3 564.6 L353.9 564.1 L354.5 519.9 L355.1 519.9 L355.7 520.2 L356.3 519.8 L356.9 519.1 L357.5 519.2 L358.1 524.5 L358.7 524.1 L359.3 524.2 L359.9 524.1 L360.5 523.5 L361.1 524.9 L361.7 524.1 L362.3 524.4 L362.9 524.5 L363.5 524.3 L364.1 524.8 L364.7 524.4 L365.3 524.0 L365.9 524.0 L366.5 564.4 L367.1 564.6 L367.7 563.8 L368.3 563.9 L368.9 563.4 L369.5 564.3 L370.1 564.2 L370.7 564.0 L371.3 564.4 L371.9 563.2 L372.5 564.2 L373.1 564.2 L373.7 564.1 L374.3 564.6 L374.9 565.0 L375.5 564.0 L376.1 563.7 L376.7 563.9 L377.3 564.2 L377.9 564.5 L378.5 563.8 L379.1 564.7 L379.7 563.7 L380.3 564.6 L380.9 564.5 L381.5 564.6 L382.1 565.4 L382.7 564.3 L383.3 564.5 L383.9 564.8 L384.5 565.1 L385.1 556.8 L385.7 556.9 L386.3 556.7 L386.9 556.8 L387.5 563.5 L388.1 565.4 L388.7 565.3 L389.3 537.8 L389.9 537.9 L390.5 538.0 L391.1 537.0 L391.7 538.1 L392.3 565.4 L392.9 564.7 L393.5 565.2 L394.1 566.2 L394.7 565.1 L395.3 565.7 L395.9 566.5 L396.5 566.9 L397.1 567.5 L397.7 567.5 L398.3 566.2 L398.9 567.9 L399.5 566.9 L400.1 566.9 L400.7 568.0 L401.3 567.2 L401.9 566.6 L402.5 566.9 L403.1 566.9 L403.7 566.7 L404.3 567.0 L404.9 567.6 L405.5 567.4 L406.1 566.5 L406.7 568.5 L407.3 566.7 L407.9 567.3 L408.5 567.2 L409.1 567.6 L409.7 567.0 L410.3 567.4 L410.9 568.2 L411.5 567.2 L412.1 566.7 L412.7 567.4 L413.3 566.8 L413.9 567.0 L414.5 567.3 L415.1 567.4 L415.7 567.1 L416.3 567.6 L416.9 567.1 L417.5 566.6 L418.1 567.6 L418.7 567.7 L419.3 569.8 L419.9 568.1 L420.5 566.8 L421.1 566.0 L421.7 564.5 L422.3 565.0 L422.9 565.1 L423.5 566.3 L424.1 564.7 L424.7 565.9 L425.3 566.0 L425.9 565.6 L426.5 565.7 L427.1 565.0 L427.7 565.2 L428.3 565.3 L428.9 557.0 L429.5 556.4 L430.1 556.9 L430.7 564.1 L431.3 564.3 L431.9 564.6 L432.5 564.5 L433.1 564.6 L433.7 563.3 L434.3 564.4 L434.9 564.4 L435.5 564.8 L436.1 563.4 L436.7 564.2 L437.3 564.5 L437.9 564.4 L438.5 564.6 L439.1 564.3 L439.7 557.8 L440.3 557.3 L440.9 557.4 L441.5 562.5 L442.1 562.5 L442.7 562.1 L443.3 562.8 L443.9 562.3 L444.5 562.6 L445.1 561.9 L445.7 561.4 L446.3 562.2 L446.9 561.4 L447.5 561.5 L448.1 561.6 L448.7 561.7 L449.3 562.3 L449.9 561.4 L450.5 561.9 L451.1 561.7 L451.7 561.1 L452.3 561.2 L452.9 561.6 L453.5 561.9 L454.1 561.9 L454.7 561.9 L455.3 561.7 L455.9 561.5 L456.5 561.9 L457.1 561.2 L457.7 561.1 L458.3 561.5 L458.9 561.0 L459.5 561.5 L460.1 561.3 L460.7 561.4 L461.3 561.7 L461.9 561.3 L462.5 561.5 L463.1 560.9 L463.7 561.8 L464.3 561.3 L464.9 561.9 L465.5 560.3 L466.1 561.3 L466.7 562.5 L467.3 562.1 L467.9 564.0 L468.5 565.1 L469.1 565.9 L469.7 566.0 L470.3 568.0 L470.9 569.3 L471.5 570.2 L472.1 571.8 L472.7 569.3 L473.3 567.3 L473.9 562.5 L474.5 562.7 L475.1 562.1 L475.7 562.7 L476.3 562.4 L476.9 562.2 L477.5 562.4 L478.1 562.4 L478.7 562.8 L479.3 562.1 L479.9 562.4 L480.5 561.9 L481.1 562.8 L481.7 562.8 L482.3 561.6 L482.9 562.8 L483.5 561.5 L484.1 562.8 L484.7 562.3 L485.3 562.3 L485.9 562.3 L486.5 562.3 L487.1 567.2 L487.7 569.7 L488.3 570.3 L488.9 570.5 L489.5 569.6 L490.1 569.1 L490.7 570.1 L491.3 569.2 L491.9 570.3 L492.5 569.5 L493.1 569.3 L493.7 570.5 L494.3 569.6 L494.9 569.6 L495.5 568.8 L496.1 570.0 L496.7 568.9 L497.3 568.6 L497.9 566.9 L498.5 566.4 L499.1 566.2 L499.7 565.9 L500.3 565.5 L500.9 565.8 L501.5 565.6 L502.1 566.1 L502.7 566.0 L503.3 565.7 L503.9 565.8 L504.5 566.7 L505.1 565.7 L505.7 566.3 L506.3 566.3 L506.9 566.3 L507.5 568.0 L508.1 568.7 L508.7 569.8 L509.3 568.9 L509.9 568.1 L510.5 566.7 L511.1 567.1 L511.7 567.0 L512.3 566.4 L512.9 566.9 L513.5 567.9 L514.1 567.2 L514.7 566.1 L515.3 566.6 L515.9 566.9 L516.5 566.6 L517.1 566.8 L517.7 567.2 L518.3 566.8 L518.9 566.1 L519.5 566.9 L520.1 566.6 L520.7 566.7 L521.3 566.3 L521.9 565.9 L522.5 566.0 L523.1 566.4 L523.7 566.1 L524.3 565.3 L524.9 567.2 L525.5 566.0 L526.1 566.2 L526.7 566.9 L527.3 565.4 L527.9 567.3 L528.5 566.2 L529.1 566.9 L529.7 566.4 L530.3 566.7 L530.9 566.7 L531.5 566.6 L532.1 565.7 L532.7 565.9 L533.3 566.6 L533.9 567.3 L534.5 566.3 L535.1 566.9 L535.7 566.7 L536.3 566.8 L536.9 567.1 L537.5 565.9 L538.1 566.7 L538.7 566.5 L539.3 566.4 L539.9 566.2 L540.5 566.2 L541.1 566.1 L541.7 566.1 L542.3 567.8 L542.9 567.4 L543.5 566.6 L544.1 567.0 L544.7 566.1 L545.3 565.2 L545.9 565.7 L546.5 566.7 L547.1 567.3 L547.7 566.6 L548.3 566.1 L548.9 566.5 L549.5 566.1 L550.1 565.9 L550.7 566.5 L551.3 566.4 L551.9 566.2 L552.5 566.2 L553.1 566.1 L553.7 566.7 L554.3 567.3 L554.9 566.5 L555.5 567.7 L556.1 565.8 L556.7 566.7 L557.3 566.0 L557.9 566.5 L558.5 566.6 L559.1 566.9 L559.7 567.2 L560.3 566.3 L560.9 566.0 L561.5 566.5 L562.1 566.7 L562.7 566.3 L563.3 567.0 L563.9 567.4 L564.5 565.9 L565.1 566.8 L565.7 567.1 L566.3 565.7 L566.9 566.7 L567.5 566.5 L568.1 565.9 L568.7 567.2 L569.3 566.7 L569.9 566.4 L570.5 566.8 L571.1 566.9 L571.7 567.0 L572.3 566.9 L572.9 566.8 L573.5 566.0 L574.1 566.4 L574.7 566.7 L575.3 565.3 L575.9 567.6 L576.5 566.4 L577.1 566.1 L577.7 565.7 L578.3 566.7 L578.9 566.6 L579.5 566.3 L580.1 566.4 L580.7 566.2 L581.3 566.2 L581.9 566.6 L582.5 566.3 L583.1 566.9 L583.7 566.5 L584.3 566.7 L584.9 566.8 L585.5 567.2 L586.1 566.9 L586.7 566.7 L587.3 566.5 L587.9 566.2 L588.5 566.4 L589.1 564.3 L589.7 563.7 L590.3 564.3 L590.9 564.3 L591.5 564.1 L592.1 563.8 L592.7 564.1 L593.3 563.7 L593.9 567.0 L594.5 566.8 L595.1 566.2 L595.7 566.1 L596.3 567.0 L596.9 566.9 L597.5 566.5 L598.1 567.4 L598.7 566.5 L599.3 566.1 L599.9 567.1 L600.5 567.1 L601.1 567.4 L601.7 567.2 L602.3 566.7 L602.9 566.6 L603.5 567.1 L604.1 567.9 L604.7 566.7 L605.3 567.9 L605.9 567.3 L606.5 566.7 L607.1 567.3 L607.7 567.5 L608.3 566.8 L608.9 566.2 L609.5 567.4 L610.1 566.7 L610.7 567.4 L611.3 566.3 L611.9 567.1 L612.5 566.8 L613.1 566.5 L613.7 567.1 L614.3 567.3 L614.9 566.9 L615.5 566.6 L616.1 567.3 L616.7 566.3 L617.3 567.5 L617.9 567.4 L618.5 568.0 L619.1 567.6 L619.7 567.4 L620.3 567.3 L620.9 567.2 L621.5 566.6 L622.1 567.9 L622.7 567.5 L623.3 567.1 L623.9 566.6 L624.5 567.9 L625.1 567.5 L625.7 566.6 L626.3 567.5 L626.9 568.1 L627.5 567.2 L628.1 567.4 L628.7 567.0 L629.3 566.9 L629.9 567.7 L630.5 568.7 L631.1 567.3 L631.7 567.1 L632.3 567.6 L632.9 567.1 L633.5 567.6 L634.1 567.6 L634.7 566.7 L635.3 566.7 L635.9 567.2 L636.5 567.6 L637.1 567.3 L637.7 567.8 L638.3 566.5 L638.9 567.4 L639.5 566.9 L640.1 567.2 L640.7 567.4 L641.3 566.7 L641.9 567.1 L642.5 566.6 L643.1 567.3 L643.7 566.8 L644.3 567.0 L644.9 567.3 L645.5 566.9 L646.1 567.8 L646.7 566.9 L647.3 567.6 L647.9 567.3 L648.5 566.7 L649.1 567.4 L649.7 568.9 L650.3 571.0 L650.9 572.6 L651.5 573.5 L652.1 572.5 L652.7 565.2 L653.3 564.1 L653.9 564.2 L654.5 565.4 L655.1 564.9 L655.7 571.4 L656.3 571.0 L656.9 570.7 L657.5 570.5 L658.1 570.6 L658.7 571.4 L659.3 570.5 L659.9 571.0 L660.5 570.2 L661.1 570.5 L661.7 570.1 L662.3 570.7 L662.9 571.1 L663.5 570.9 L664.1 570.6 L664.7 571.1 L665.3 570.6 L665.9 571.0 L666.5 570.9 L667.1 571.1 L667.7 569.6 L668.3 570.2 L668.9 571.2 L669.5 570.7 L670.1 571.9 L670.7 570.6 L671.3 570.5 L671.9 571.4 L672.5 570.9 L673.1 571.6 L673.7 570.9 L674.3 570.5 L674.9 570.9 L675.5 570.2 L676.1 570.3 L676.7 570.2 L677.3 570.3 L677.9 570.8 L678.5 570.2 L679.1 570.5 L679.7 570.1 L680.3 570.8 L680.9 569.0 L681.5 570.2 L682.1 570.3 L682.7 569.7 L683.3 570.7 L683.9 570.3 L684.5 570.8 L685.1 570.6 L685.7 570.4 L686.3 570.0 L686.9 569.5 L687.5 569.9 L688.1 569.8 L688.7 570.1 L689.3 569.7 L689.9 571.4 L690.5 569.1 L691.1 570.4 L691.7 569.6 L692.3 569.7 L692.9 570.2 L693.5 569.8 L694.1 569.2 L694.7 569.9 L695.3 569.6 L695.9 568.7 L696.5 569.8 L697.1 569.1 L697.7 569.3 L698.3 569.8 L698.9 569.7 L699.5 569.4 L700.1 570.6 L700.7 569.7 L701.3 569.2 L701.9 569.6 L702.5 569.4 L703.1 568.3 L703.7 568.6 L704.3 568.7 L704.9 570.3 L705.5 569.2 L706.1 569.2 L706.7 569.0 L707.3 569.7 L707.9 569.2 L708.5 570.0 L709.1 569.6 L709.7 570.0 L710.3 569.1 L710.9 569.3 L711.5 568.9 L712.1 569.0 L712.7 568.2 L713.3 568.8 L713.9 568.6 L714.2 568.7 L714.2 574.3 Z" fill="#ffc800"/><path d="M158.9 574.3 L158.9 570.6 L159.5 571.0 L160.1 570.6 L160.7 570.7 L161.3 570.4 L161.9 569.9 L162.5 570.9 L163.1 570.5 L163.7 570.1 L164.3 570.6 L164.9 570.0 L165.5 570.9 L166.1 571.2 L166.7 571.5 L167.3 570.3 L167.9 570.4 L168.5 569.9 L169.1 569.9 L169.7 570.3 L170.3 571.0 L170.9 570.7 L171.5 570.9 L172.1 571.5 L172.7 571.1 L173.3 570.7 L173.9 571.2 L174.5 571.2 L175.1 572.2 L175.7 570.8 L176.3 571.8 L176.9 570.9 L177.5 571.1 L178.1 571.1 L178.7 571.4 L179.3 571.7 L179.9 572.2 L180.5 570.1 L181.1 570.0 L181.7 568.8 L182.3 567.6 L182.9 565.8 L183.5 566.5 L184.1 565.9 L184.7 566.2 L185.3 565.9 L185.9 566.3 L186.5 566.6 L187.1 566.6 L187.7 565.9 L188.3 566.5 L188.9 566.7 L189.5 565.5 L190.1 566.7 L190.7 565.3 L191.3 566.3 L191.9 566.7 L192.5 565.8 L193.1 565.4 L193.7 565.9 L194.3 566.3 L194.9 565.6 L195.5 565.8 L196.1 565.8 L196.7 566.8 L197.3 566.7 L197.9 565.9 L198.5 565.2 L199.1 566.0 L199.7 565.8 L200.3 565.9 L200.9 565.9 L201.5 565.4 L202.1 566.0 L202.7 565.9 L203.3 565.6 L203.9 565.3 L204.5 565.3 L205.1 565.8 L205.7 565.0 L206.3 565.4 L206.9 565.1 L207.5 564.8 L208.1 565.8 L208.7 565.5 L209.3 565.5 L209.9 565.9 L210.5 564.8 L211.1 565.5 L211.7 565.6 L212.3 565.9 L212.9 565.0 L213.5 565.9 L214.1 565.6 L214.7 566.2 L215.3 566.1 L215.9 565.8 L216.5 566.6 L217.1 565.5 L217.7 565.3 L218.3 565.3 L218.9 565.0 L219.5 565.5 L220.1 564.6 L220.7 565.5 L221.3 565.7 L221.9 566.0 L222.5 565.3 L223.1 566.2 L223.7 565.2 L224.3 565.4 L224.9 564.6 L225.5 565.1 L226.1 565.1 L226.7 566.2 L227.3 565.8 L227.9 565.0 L228.5 565.8 L229.1 566.1 L229.7 566.6 L230.3 567.6 L230.9 568.3 L231.5 569.0 L232.1 569.2 L232.7 570.8 L233.3 571.7 L233.9 571.3 L234.5 570.1 L235.1 569.4 L235.7 569.2 L236.3 569.3 L236.9 568.6 L237.5 567.7 L238.1 568.2 L238.7 567.9 L239.3 568.3 L239.9 567.8 L240.5 567.3 L241.1 568.0 L241.7 568.4 L242.3 567.5 L242.9 567.9 L243.5 568.4 L244.1 567.8 L244.7 567.7 L245.3 569.0 L245.9 568.4 L246.5 568.5 L247.1 568.8 L247.7 567.7 L248.3 568.6 L248.9 567.5 L249.5 567.7 L250.1 568.1 L250.7 567.1 L251.3 568.3 L251.9 568.3 L252.5 567.8 L253.1 568.3 L253.7 568.4 L254.3 568.2 L254.9 568.3 L255.5 568.7 L256.1 567.8 L256.7 568.1 L257.3 567.7 L257.9 568.5 L258.5 567.8 L259.1 568.2 L259.7 568.1 L260.3 568.0 L260.9 568.8 L261.5 568.0 L262.1 568.7 L262.7 568.4 L263.3 568.6 L263.9 567.9 L264.5 568.4 L265.1 568.4 L265.7 567.7 L266.3 568.1 L266.9 567.9 L267.5 568.0 L268.1 568.6 L268.7 567.7 L269.3 567.2 L269.9 567.2 L270.5 567.8 L271.1 567.7 L271.7 568.0 L272.3 568.3 L272.9 568.8 L273.5 568.1 L274.1 568.2 L274.7 567.5 L275.3 567.9 L275.9 568.0 L276.5 567.7 L277.1 566.1 L277.7 567.4 L278.3 567.8 L278.9 567.4 L279.5 566.3 L280.1 566.9 L280.7 567.3 L281.3 567.2 L281.9 566.6 L282.5 566.6 L283.1 567.5 L283.7 566.4 L284.3 567.7 L284.9 567.0 L285.5 567.1 L286.1 566.4 L286.7 566.7 L287.3 567.3 L287.9 566.3 L288.5 568.0 L289.1 566.3 L289.7 566.4 L290.3 567.0 L290.9 567.2 L291.5 567.4 L292.1 566.8 L292.7 566.9 L293.3 566.9 L293.9 566.7 L294.5 565.8 L295.1 567.5 L295.7 567.1 L296.3 567.1 L296.9 566.7 L297.5 567.1 L298.1 567.0 L298.7 567.0 L299.3 567.5 L299.9 566.2 L300.5 567.1 L301.1 566.5 L301.7 566.8 L302.3 567.7 L302.9 566.5 L303.5 567.0 L304.1 566.7 L304.7 567.5 L305.3 566.5 L305.9 566.2 L306.5 567.2 L307.1 566.8 L307.7 566.8 L308.3 567.5 L308.9 566.6 L309.5 566.8 L310.1 567.1 L310.7 567.2 L311.3 566.8 L311.9 567.5 L312.5 568.1 L313.1 566.8 L313.7 567.9 L314.3 566.0 L314.9 567.7 L315.5 566.8 L316.1 567.1 L316.7 566.8 L317.3 566.7 L317.9 566.4 L318.5 566.8 L319.1 567.6 L319.7 567.5 L320.3 566.8 L320.9 566.7 L321.5 566.7 L322.1 566.4 L322.7 567.9 L323.3 567.3 L323.9 567.1 L324.5 566.8 L325.1 566.5 L325.7 567.6 L326.3 567.4 L326.9 566.5 L327.5 567.5 L328.1 566.5 L328.7 567.3 L329.3 566.5 L329.9 566.8 L330.5 567.2 L331.1 567.2 L331.7 567.5 L332.3 566.6 L332.9 567.8 L333.5 567.6 L334.1 567.0 L334.7 567.2 L335.3 566.6 L335.9 566.9 L336.5 566.4 L337.1 567.1 L337.7 567.5 L338.3 566.8 L338.9 566.8 L339.5 566.1 L340.1 567.4 L340.7 566.2 L341.3 566.8 L341.9 567.0 L342.5 566.8 L343.1 567.8 L343.7 567.0 L344.3 567.8 L344.9 567.6 L345.5 566.8 L346.1 567.2 L346.7 567.5 L347.3 566.4 L347.9 566.2 L348.5 565.6 L349.1 565.5 L349.7 565.0 L350.3 565.0 L350.9 565.5 L351.5 565.7 L352.1 565.1 L352.7 565.1 L353.3 565.4 L353.9 564.9 L354.5 564.5 L355.1 564.6 L355.7 564.5 L356.3 564.5 L356.9 565.7 L357.5 565.7 L358.1 564.2 L358.7 565.3 L359.3 563.8 L359.9 564.9 L360.5 564.9 L361.1 564.7 L361.7 565.7 L362.3 564.7 L362.9 565.5 L363.5 564.4 L364.1 565.1 L364.7 565.6 L365.3 565.6 L365.9 565.7 L366.5 565.2 L367.1 565.4 L367.7 564.6 L368.3 564.7 L368.9 564.2 L369.5 565.1 L370.1 565.0 L370.7 564.8 L371.3 565.2 L371.9 564.0 L372.5 565.0 L373.1 565.0 L373.7 564.9 L374.3 565.4 L374.9 565.8 L375.5 564.8 L376.1 564.5 L376.7 564.7 L377.3 565.0 L377.9 565.3 L378.5 564.6 L379.1 565.5 L379.7 564.5 L380.3 565.4 L380.9 565.3 L381.5 565.4 L382.1 566.2 L382.7 565.1 L383.3 565.3 L383.9 565.6 L384.5 565.9 L385.1 564.9 L385.7 565.2 L386.3 566.3 L386.9 565.6 L387.5 564.3 L388.1 566.2 L388.7 566.1 L389.3 566.0 L389.9 565.6 L390.5 566.6 L391.1 566.8 L391.7 565.9 L392.3 566.2 L392.9 565.5 L393.5 566.0 L394.1 567.0 L394.7 565.9 L395.3 566.5 L395.9 567.3 L396.5 567.7 L397.1 568.3 L397.7 568.3 L398.3 567.0 L398.9 568.7 L399.5 567.7 L400.1 567.7 L400.7 568.8 L401.3 568.0 L401.9 567.4 L402.5 567.7 L403.1 567.7 L403.7 567.5 L404.3 567.8 L404.9 568.4 L405.5 568.2 L406.1 567.3 L406.7 569.3 L407.3 567.5 L407.9 568.1 L408.5 568.0 L409.1 568.4 L409.7 567.8 L410.3 568.2 L410.9 569.0 L411.5 568.0 L412.1 567.5 L412.7 568.2 L413.3 567.6 L413.9 567.8 L414.5 568.1 L415.1 568.2 L415.7 567.9 L416.3 568.4 L416.9 567.9 L417.5 567.4 L418.1 568.4 L418.7 568.5 L419.3 570.6 L419.9 568.9 L420.5 567.6 L421.1 566.8 L421.7 565.3 L422.3 565.8 L422.9 565.9 L423.5 567.1 L424.1 565.5 L424.7 566.7 L425.3 566.8 L425.9 566.4 L426.5 566.5 L427.1 565.8 L427.7 566.0 L428.3 566.1 L428.9 566.1 L429.5 565.7 L430.1 565.5 L430.7 564.9 L431.3 565.1 L431.9 565.4 L432.5 565.3 L433.1 565.4 L433.7 564.1 L434.3 565.2 L434.9 565.2 L435.5 565.6 L436.1 564.2 L436.7 565.0 L437.3 565.3 L437.9 565.2 L438.5 565.4 L439.1 565.1 L439.7 563.9 L440.3 564.0 L440.9 564.7 L441.5 563.3 L442.1 563.3 L442.7 562.9 L443.3 563.6 L443.9 563.1 L444.5 563.4 L445.1 562.7 L445.7 562.2 L446.3 563.0 L446.9 562.2 L447.5 562.3 L448.1 562.4 L448.7 562.5 L449.3 563.1 L449.9 562.2 L450.5 562.7 L451.1 562.5 L451.7 561.9 L452.3 562.0 L452.9 562.4 L453.5 562.7 L454.1 562.7 L454.7 562.7 L455.3 562.5 L455.9 562.3 L456.5 562.7 L457.1 562.0 L457.7 561.9 L458.3 562.3 L458.9 561.8 L459.5 562.3 L460.1 562.1 L460.7 562.2 L461.3 562.5 L461.9 562.1 L462.5 562.3 L463.1 561.7 L463.7 562.6 L464.3 562.1 L464.9 562.7 L465.5 561.1 L466.1 562.1 L466.7 563.3 L467.3 562.9 L467.9 564.8 L468.5 565.9 L469.1 566.7 L469.7 566.8 L470.3 568.8 L470.9 570.1 L471.5 571.0 L472.1 572.6 L472.7 570.1 L473.3 568.1 L473.9 566.8 L474.5 567.0 L475.1 567.2 L475.7 566.9 L476.3 566.8 L476.9 567.3 L477.5 565.9 L478.1 567.1 L478.7 566.6 L479.3 566.9 L479.9 566.7 L480.5 566.5 L481.1 568.0 L481.7 567.5 L482.3 567.3 L482.9 567.6 L483.5 567.2 L484.1 567.6 L484.7 566.8 L485.3 567.4 L485.9 567.5 L486.5 567.3 L487.1 568.6 L487.7 571.1 L488.3 571.7 L488.9 572.2 L489.5 571.9 L490.1 571.6 L490.7 571.5 L491.3 570.6 L491.9 572.0 L492.5 571.2 L493.1 570.7 L493.7 571.9 L494.3 571.0 L494.9 571.8 L495.5 572.7 L496.1 571.4 L496.7 570.3 L497.3 570.0 L497.9 568.9 L498.5 568.1 L499.1 568.7 L499.7 568.2 L500.3 567.8 L500.9 568.9 L501.5 567.0 L502.1 568.0 L502.7 568.9 L503.3 567.9 L503.9 568.0 L504.5 568.1 L505.1 568.2 L505.7 568.9 L506.3 568.4 L506.9 568.4 L507.5 569.4 L508.1 570.1 L508.7 571.2 L509.3 570.3 L509.9 569.5 L510.5 568.1 L511.1 568.5 L511.7 568.4 L512.3 567.8 L512.9 568.3 L513.5 569.3 L514.1 568.6 L514.7 567.5 L515.3 568.0 L515.9 568.3 L516.5 568.0 L517.1 568.2 L517.7 568.6 L518.3 568.2 L518.9 567.5 L519.5 568.3 L520.1 568.0 L520.7 568.1 L521.3 567.7 L521.9 567.3 L522.5 567.4 L523.1 567.8 L523.7 567.5 L524.3 566.7 L524.9 568.6 L525.5 567.4 L526.1 567.6 L526.7 568.3 L527.3 566.8 L527.9 568.7 L528.5 567.6 L529.1 568.3 L529.7 567.8 L530.3 568.1 L530.9 568.1 L531.5 568.0 L532.1 567.1 L532.7 567.3 L533.3 568.0 L533.9 568.7 L534.5 567.7 L535.1 568.3 L535.7 568.1 L536.3 568.2 L536.9 568.5 L537.5 567.3 L538.1 568.1 L538.7 567.9 L539.3 567.8 L539.9 567.6 L540.5 567.6 L541.1 567.5 L541.7 567.5 L542.3 569.2 L542.9 568.8 L543.5 568.0 L544.1 568.4 L544.7 567.5 L545.3 566.6 L545.9 567.1 L546.5 568.1 L547.1 568.7 L547.7 568.0 L548.3 567.5 L548.9 567.9 L549.5 567.5 L550.1 567.3 L550.7 567.9 L551.3 567.8 L551.9 567.6 L552.5 567.6 L553.1 567.5 L553.7 568.1 L554.3 568.7 L554.9 567.9 L555.5 569.1 L556.1 567.2 L556.7 568.1 L557.3 567.4 L557.9 567.9 L558.5 568.0 L559.1 568.3 L559.7 568.6 L560.3 567.7 L560.9 567.4 L561.5 567.9 L562.1 568.1 L562.7 567.7 L563.3 568.4 L563.9 568.8 L564.5 567.3 L565.1 568.2 L565.7 568.5 L566.3 567.1 L566.9 568.1 L567.5 567.9 L568.1 567.3 L568.7 568.6 L569.3 568.1 L569.9 567.8 L570.5 568.2 L571.1 568.3 L571.7 568.4 L572.3 568.3 L572.9 568.2 L573.5 567.4 L574.1 567.8 L574.7 568.1 L575.3 566.7 L575.9 569.0 L576.5 567.8 L577.1 567.5 L577.7 567.1 L578.3 568.1 L578.9 568.0 L579.5 567.7 L580.1 567.8 L580.7 567.6 L581.3 567.6 L581.9 568.0 L582.5 567.7 L583.1 568.3 L583.7 567.9 L584.3 568.1 L584.9 568.2 L585.5 568.6 L586.1 568.3 L586.7 568.1 L587.3 567.9 L587.9 567.6 L588.5 567.8 L589.1 568.3 L589.7 567.8 L590.3 567.3 L590.9 568.5 L591.5 567.3 L592.1 568.1 L592.7 568.2 L593.3 567.6 L593.9 568.4 L594.5 568.2 L595.1 567.6 L595.7 567.5 L596.3 568.4 L596.9 568.3 L597.5 567.9 L598.1 568.8 L598.7 567.9 L599.3 567.5 L599.9 568.5 L600.5 567.9 L601.1 568.2 L601.7 568.0 L602.3 567.5 L602.9 567.4 L603.5 567.9 L604.1 568.7 L604.7 567.5 L605.3 568.7 L605.9 568.1 L606.5 567.5 L607.1 568.1 L607.7 568.3 L608.3 567.6 L608.9 567.0 L609.5 568.2 L610.1 567.5 L610.7 568.2 L611.3 567.1 L611.9 567.9 L612.5 567.6 L613.1 567.3 L613.7 567.9 L614.3 568.1 L614.9 567.7 L615.5 567.4 L616.1 568.1 L616.7 567.1 L617.3 568.3 L617.9 568.2 L618.5 568.8 L619.1 568.4 L619.7 568.2 L620.3 568.1 L620.9 568.0 L621.5 567.4 L622.1 568.7 L622.7 568.3 L623.3 567.9 L623.9 567.4 L624.5 568.7 L625.1 568.3 L625.7 567.4 L626.3 568.3 L626.9 568.9 L627.5 568.0 L628.1 568.2 L628.7 567.8 L629.3 567.7 L629.9 568.5 L630.5 569.5 L631.1 568.1 L631.7 567.9 L632.3 568.4 L632.9 567.9 L633.5 568.4 L634.1 568.4 L634.7 567.5 L635.3 567.5 L635.9 568.0 L636.5 568.4 L637.1 568.1 L637.7 568.6 L638.3 567.3 L638.9 568.2 L639.5 567.7 L640.1 568.0 L640.7 568.2 L641.3 567.5 L641.9 567.9 L642.5 567.4 L643.1 568.1 L643.7 567.6 L644.3 567.8 L644.9 568.1 L645.5 567.7 L646.1 568.6 L646.7 567.7 L647.3 568.4 L647.9 568.1 L648.5 567.5 L649.1 568.2 L649.7 569.7 L650.3 571.8 L650.9 573.4 L651.5 574.3 L652.1 573.3 L652.7 574.3 L653.3 572.9 L653.9 573.8 L654.5 573.8 L655.1 573.1 L655.7 572.2 L656.3 571.8 L656.9 571.5 L657.5 571.3 L658.1 571.4 L658.7 572.2 L659.3 571.3 L659.9 571.8 L660.5 571.0 L661.1 571.3 L661.7 570.9 L662.3 571.5 L662.9 571.9 L663.5 571.7 L664.1 571.4 L664.7 571.9 L665.3 571.4 L665.9 571.8 L666.5 571.7 L667.1 571.9 L667.7 570.4 L668.3 571.0 L668.9 572.0 L669.5 571.5 L670.1 572.7 L670.7 571.4 L671.3 571.3 L671.9 572.2 L672.5 571.7 L673.1 572.4 L673.7 571.7 L674.3 571.3 L674.9 571.7 L675.5 571.0 L676.1 571.1 L676.7 571.0 L677.3 571.1 L677.9 571.6 L678.5 571.0 L679.1 571.3 L679.7 570.9 L680.3 571.6 L680.9 569.8 L681.5 571.0 L682.1 571.1 L682.7 570.5 L683.3 571.5 L683.9 571.1 L684.5 571.6 L685.1 571.4 L685.7 571.2 L686.3 570.8 L686.9 570.3 L687.5 570.7 L688.1 570.6 L688.7 570.9 L689.3 570.5 L689.9 572.2 L690.5 569.9 L691.1 571.2 L691.7 570.4 L692.3 570.5 L692.9 571.0 L693.5 570.6 L694.1 570.0 L694.7 570.7 L695.3 570.4 L695.9 569.5 L696.5 570.6 L697.1 569.9 L697.7 570.1 L698.3 570.6 L698.9 570.5 L699.5 570.2 L700.1 571.4 L700.7 570.5 L701.3 570.0 L701.9 570.4 L702.5 570.2 L703.1 569.1 L703.7 569.4 L704.3 569.5 L704.9 571.1 L705.5 570.0 L706.1 570.0 L706.7 569.8 L707.3 570.5 L707.9 570.0 L708.5 570.8 L709.1 570.4 L709.7 570.8 L710.3 569.9 L710.9 570.1 L711.5 569.7 L712.1 569.8 L712.7 569.0 L713.3 569.6 L713.9 569.4 L714.2 569.5 L714.2 574.3 Z" fill="#00ffff"/><rect x="131.5" y="118" width="610.5" height="227" fill="none" stroke="#d6d6de" stroke-width="1"/><rect x="131.5" y="348.5" width="610.5" height="226" fill="none" stroke="#d6d6de" stroke-width="1"/><line x1="131.5" y1="118" x2="131.5" y2="345" stroke="#9a9aa8"/><line x1="131.5" y1="348.5" x2="131.5" y2="574.5" stroke="#9a9aa8"/><line x1="129" y1="345.0" x2="131" y2="345.0" stroke="#888"/><line x1="129" y1="332.7" x2="131" y2="332.7" stroke="#888"/><line x1="129" y1="320.4" x2="131" y2="320.4" stroke="#888"/><line x1="129" y1="308.1" x2="131" y2="308.1" stroke="#888"/><line x1="129" y1="295.9" x2="131" y2="295.9" stroke="#888"/><line x1="129" y1="283.6" x2="131" y2="283.6" stroke="#888"/><line x1="129" y1="271.3" x2="131" y2="271.3" stroke="#888"/><line x1="129" y1="259.0" x2="131" y2="259.0" stroke="#888"/><line x1="129" y1="246.7" x2="131" y2="246.7" stroke="#888"/><line x1="129" y1="234.4" x2="131" y2="234.4" stroke="#888"/><line x1="129" y1="222.2" x2="131" y2="222.2" stroke="#888"/><line x1="129" y1="209.9" x2="131" y2="209.9" stroke="#888"/><line x1="129" y1="197.6" x2="131" y2="197.6" stroke="#888"/><line x1="129" y1="185.3" x2="131" y2="185.3" stroke="#888"/><line x1="129" y1="173.0" x2="131" y2="173.0" stroke="#888"/><line x1="129" y1="160.8" x2="131" y2="160.8" stroke="#888"/><line x1="129" y1="148.5" x2="131" y2="148.5" stroke="#888"/><line x1="129" y1="136.2" x2="131" y2="136.2" stroke="#888"/><line x1="129" y1="123.9" x2="131" y2="123.9" stroke="#888"/><line x1="129" y1="574.3" x2="131" y2="574.3" stroke="#888"/><line x1="129" y1="562.8" x2="131" y2="562.8" stroke="#888"/><line x1="129" y1="551.2" x2="131" y2="551.2" stroke="#888"/><line x1="129" y1="539.7" x2="131" y2="539.7" stroke="#888"/><line x1="129" y1="528.1" x2="131" y2="528.1" stroke="#888"/><line x1="129" y1="516.6" x2="131" y2="516.6" stroke="#888"/><line x1="129" y1="505.0" x2="131" y2="505.0" stroke="#888"/><line x1="129" y1="493.5" x2="131" y2="493.5" stroke="#888"/><line x1="129" y1="481.9" x2="131" y2="481.9" stroke="#888"/><line x1="129" y1="470.4" x2="131" y2="470.4" stroke="#888"/><line x1="129" y1="458.8" x2="131" y2="458.8" stroke="#888"/><line x1="129" y1="447.3" x2="131" y2="447.3" stroke="#888"/><line x1="129" y1="435.7" x2="131" y2="435.7" stroke="#888"/><line x1="129" y1="424.2" x2="131" y2="424.2" stroke="#888"/><line x1="129" y1="412.6" x2="131" y2="412.6" stroke="#888"/><line x1="129" y1="401.1" x2="131" y2="401.1" stroke="#888"/><line x1="129" y1="389.5" x2="131" y2="389.5" stroke="#888"/><line x1="129" y1="378.0" x2="131" y2="378.0" stroke="#888"/><line x1="129" y1="366.4" x2="131" y2="366.4" stroke="#888"/><line x1="129" y1="354.9" x2="131" y2="354.9" stroke="#888"/><line x1="141.5" y1="574.3" x2="141.5" y2="576.5" stroke="#888"/><line x1="268.1" y1="574.3" x2="268.1" y2="576.5" stroke="#888"/><line x1="394.7" y1="574.3" x2="394.7" y2="576.5" stroke="#888"/><line x1="521.3" y1="574.3" x2="521.3" y2="576.5" stroke="#888"/><line x1="647.9" y1="574.3" x2="647.9" y2="576.5" stroke="#888"/><g font-family="Liberation Sans" font-size="7.2px" font-weight="bold" fill="#202030" text-anchor="end"><text x="127.5" y="347.6">0</text><text x="127.5" y="335.3">100</text><text x="127.5" y="323.0">200</text><text x="127.5" y="310.8">300</text><text x="127.5" y="298.5">400</text><text x="127.5" y="286.2">500</text><text x="127.5" y="273.9">600</text><text x="127.5" y="261.6">700</text><text x="127.5" y="249.3">800</text><text x="127.5" y="237.0">900</text><text x="127.5" y="224.8">1000</text><text x="127.5" y="212.5">1100</text><text x="127.5" y="200.2">1200</text><text x="127.5" y="187.9">1300</text><text x="127.5" y="175.6">1400</text><text x="127.5" y="163.3">1500</text><text x="127.5" y="151.1">1600</text><text x="127.5" y="138.8">1700</text><text x="127.5" y="126.5">1800</text><text x="127.5" y="576.9">0</text><text x="127.5" y="565.4">1,000</text><text x="127.5" y="553.8">2,000</text><text x="127.5" y="542.3">3,000</text><text x="127.5" y="530.7">4,000</text><text x="127.5" y="519.2">5,000</text><text x="127.5" y="507.6">6,000</text><text x="127.5" y="496.1">7,000</text><text x="127.5" y="484.5">8,000</text><text x="127.5" y="473.0">9,000</text><text x="127.5" y="461.4">10,000</text><text x="127.5" y="449.9">11,000</text><text x="127.5" y="438.3">12,000</text><text x="127.5" y="426.8">13,000</text><text x="127.5" y="415.2">14,000</text><text x="127.5" y="403.7">15,000</text><text x="127.5" y="392.1">16,000</text><text x="127.5" y="380.6">17,000</text><text x="127.5" y="369.0">18,000</text><text x="127.5" y="357.5">19,000</text></g><g font-family="Liberation Sans" font-size="8.3px" fill="#1c1c2c" stroke="#1c1c2c" stroke-width="0.15"><text x="106.5" y="583" textLength="70" lengthAdjust="spacingAndGlyphs">07/07/2018 12:00 AM</text><text x="233.1" y="583" textLength="70" lengthAdjust="spacingAndGlyphs">14/07/2018 12:00 AM</text><text x="359.7" y="583" textLength="70" lengthAdjust="spacingAndGlyphs">21/07/2018 12:00 AM</text><text x="486.3" y="583" textLength="70" lengthAdjust="spacingAndGlyphs">28/07/2018 12:00 AM</text><text x="612.9" y="583" textLength="70" lengthAdjust="spacingAndGlyphs">04/08/2018 12:00 AM</text></g><text x="346" y="112.4" font-family="Liberation Sans" font-size="11.5px" font-weight="bold" fill="#000" textLength="141.5" lengthAdjust="spacingAndGlyphs">Resources &amp; Job Count</text><text transform="translate(107.3,265) rotate(-90)" font-family="Liberation Sans" font-size="9.8px" fill="#202030" stroke="#202030" stroke-width="0.2" textLength="65.6" lengthAdjust="spacingAndGlyphs">RESOURCE COUNT</text><text transform="translate(100.6,482) rotate(-90)" font-family="Liberation Sans" font-size="9.5px" fill="#202030" stroke="#202030" stroke-width="0.2" textLength="40.3" lengthAdjust="spacingAndGlyphs">JOB COUNT</text><g font-family="Liberation Sans" font-size="8.6px" fill="#2a2a2a"><rect x="309.5" y="587.5" width="213.5" height="12" fill="#fff" stroke="#555" stroke-width="0.8"/><rect x="312.0" y="591" width="3.6" height="5.8" fill="#00ff00"/><text x="318.8" y="596.9" textLength="17.5" lengthAdjust="spacingAndGlyphs">BUSY</text><rect x="341.2" y="591" width="3.6" height="5.8" fill="#ffff00"/><text x="347.9" y="596.9" textLength="16.2" lengthAdjust="spacingAndGlyphs">IDLE</text><rect x="368.3" y="591" width="3.6" height="5.8" fill="#ff0000"/><text x="375.1" y="596.9" textLength="23.9" lengthAdjust="spacingAndGlyphs">DOWN</text><rect x="403.3" y="591" width="3.6" height="5.8" fill="#00ffff"/><text x="409.8" y="596.9" textLength="36.3" lengthAdjust="spacingAndGlyphs">RUNNING</text><rect x="450.2" y="591" width="3.6" height="5.8" fill="#ffc800"/><text x="456.7" y="596.9" textLength="21.2" lengthAdjust="spacingAndGlyphs">HOLD</text><rect x="482.8" y="591" width="3.6" height="5.8" fill="#ff00ff"/><text x="489.2" y="596.9" textLength="31.0" lengthAdjust="spacingAndGlyphs">QUEUED</text></g><!--/CHART-->
</svg>
</body></html>
